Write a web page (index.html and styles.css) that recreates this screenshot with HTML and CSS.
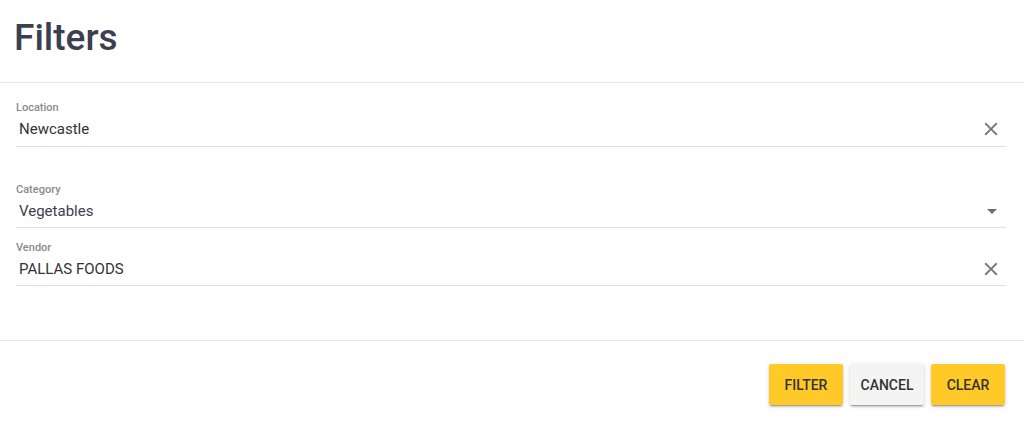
FILE: index.html
```html
<!DOCTYPE html>
<html lang="en">
<head>
<meta charset="utf-8">
<title>Filters</title>
<link rel="stylesheet" href="styles.css">
</head>
<body>
<div class="dialog">
  <header class="dialog-header">
    <h1 class="dialog-title">Filters</h1>
  </header>
  <section class="dialog-body">
    <div class="field field-location">
      <label class="field-label">Location</label>
      <div class="field-control">
        <span class="field-value">Newcastle</span>
        <span class="field-icon">
          <svg viewBox="0 0 24 24" width="22" height="22"><path d="M19 6.41L17.59 5 12 10.59 6.41 5 5 6.41 10.59 12 5 17.59 6.41 19 12 13.41 17.59 19 19 17.59 13.41 12z" fill="currentColor"/></svg>
        </span>
      </div>
    </div>
    <div class="field field-category">
      <label class="field-label">Category</label>
      <div class="field-control field-control-tight">
        <span class="field-value field-value-select">Vegetables</span>
        <span class="field-icon"><span class="select-arrow"></span></span>
      </div>
    </div>
    <div class="field">
      <label class="field-label">Vendor</label>
      <div class="field-control field-control-tight">
        <span class="field-value">PALLAS FOODS</span>
        <span class="field-icon">
          <svg viewBox="0 0 24 24" width="22" height="22"><path d="M19 6.41L17.59 5 12 10.59 6.41 5 5 6.41 10.59 12 5 17.59 6.41 19 12 13.41 17.59 19 19 17.59 13.41 12z" fill="currentColor"/></svg>
        </span>
      </div>
    </div>
  </section>
  <footer class="dialog-actions">
    <button class="btn btn-primary" type="button">FILTER</button>
    <button class="btn btn-secondary" type="button">CANCEL</button>
    <button class="btn btn-primary" type="button">CLEAR</button>
  </footer>
</div>
</body>
</html>
```
FILE: styles.css
```css
* { box-sizing: border-box; }

html, body {
  margin: 0;
  padding: 0;
  background: #ffffff;
  font-family: Roboto, "Liberation Sans", Arial, sans-serif;
}

.dialog {
  width: 1024px;
  height: 424px;
  background: #fff;
}

.dialog-header {
  padding: 18px 16px 24px 14px;
  border-bottom: 1px solid #e6e6e6;
}

.dialog-title {
  margin: 0;
  font-size: 37px;
  line-height: 40px;
  font-weight: 500;
  color: #3b3f50;
}

.dialog-body {
  padding: 18px 18px 54px 16px;
  border-bottom: 1px solid #e6e6e6;
}

.field {
  display: flex;
  flex-direction: column;
}

.field-location { margin-bottom: 36px; }
.field-category { margin-bottom: 13px; }

.field-label {
  font-size: 11px;
  line-height: 13px;
  font-weight: 500;
  color: #8a8a8a;
}

.field-control {
  display: flex;
  align-items: center;
  margin-top: 5px;
  padding: 0 4px 7px 3px;
  border-bottom: 1px solid #e0e0e0;
}

.field-control-tight { padding-bottom: 6px; }

.field-value {
  flex: 1;
  font-size: 15px;
  line-height: 20px;
  color: #333333;
}

.field-value-select { color: #3c4050; }

.field-icon {
  width: 22px;
  height: 20px;
  display: flex;
  align-items: center;
  justify-content: center;
  color: #767676;
}

.field-icon svg { display: block; }

.select-arrow {
  width: 0;
  height: 0;
  border-left: 5px solid transparent;
  border-right: 5px solid transparent;
  border-top: 5px solid #6e6e6e;
  margin-left: 2px;
}

.dialog-actions {
  display: flex;
  justify-content: flex-end;
  gap: 7px;
  padding: 23px 19px 0 0;
}

.btn {
  min-width: 74px;
  height: 41px;
  padding: 0 10px;
  border: none;
  border-radius: 2px;
  font-family: Roboto, "Liberation Sans", Arial, sans-serif;
  font-size: 14px;
  font-weight: 500;
  color: #333333;
  box-shadow: 0 3px 1px -2px rgba(0,0,0,.2), 0 2px 2px 0 rgba(0,0,0,.14), 0 1px 5px 0 rgba(0,0,0,.12);
  cursor: pointer;
}

.btn-primary { background: #ffca28; }
.btn-secondary { background: #f4f4f4; }
```
